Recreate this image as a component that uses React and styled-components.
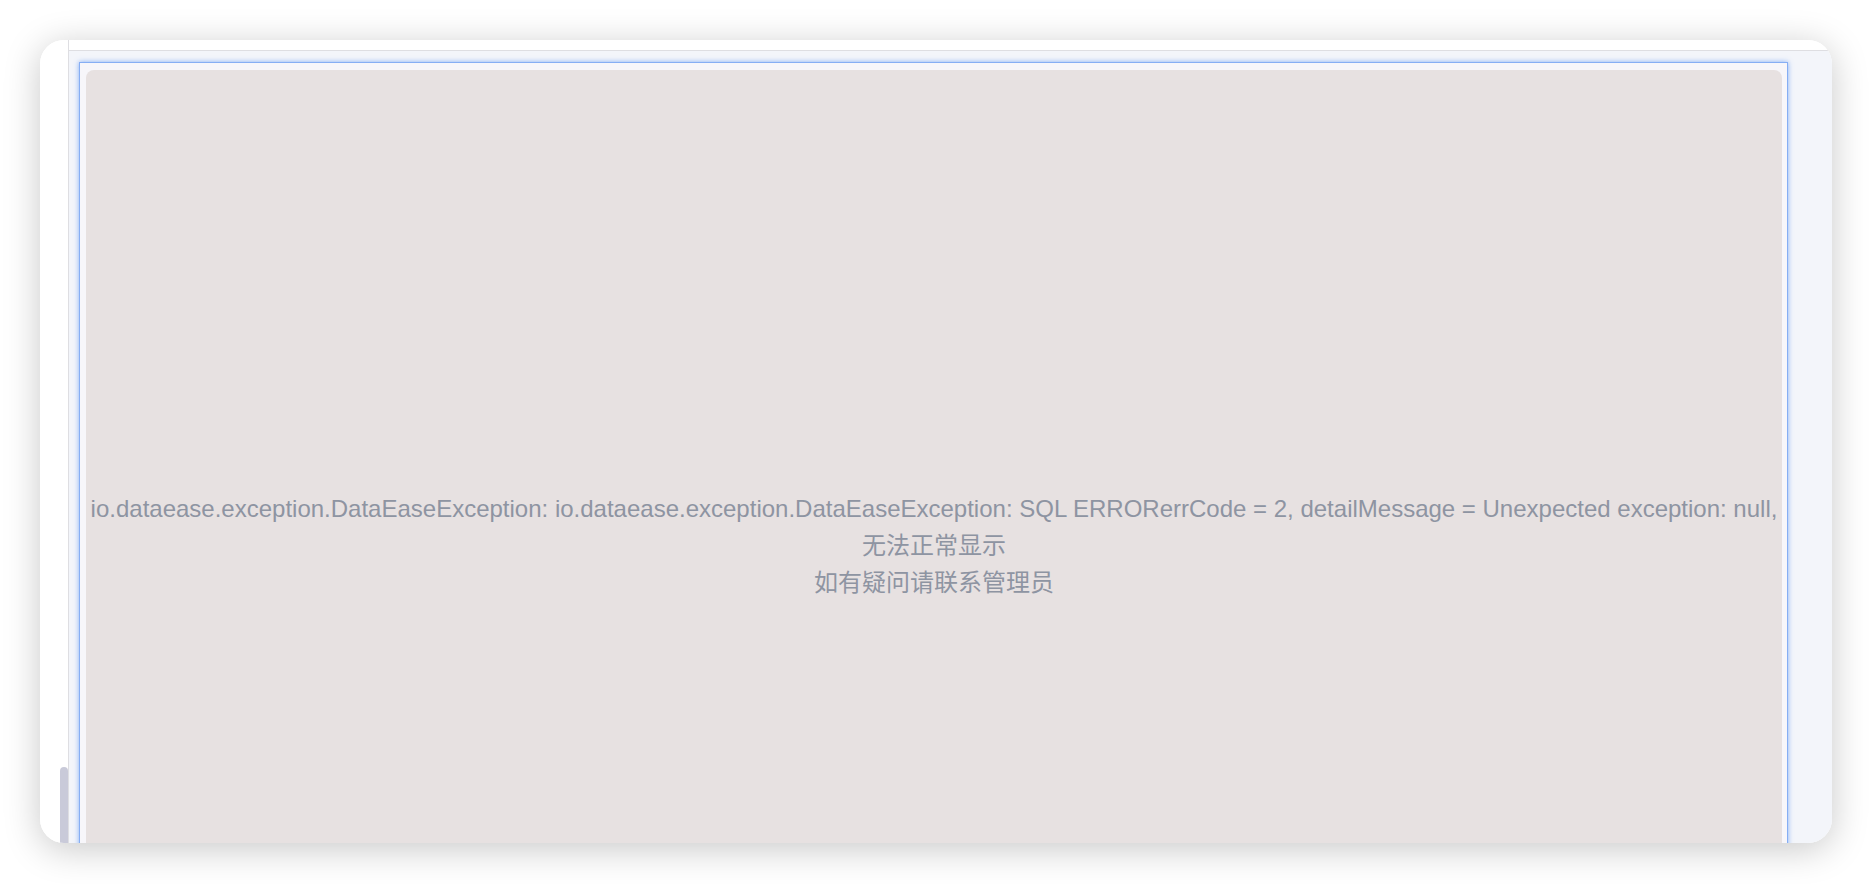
import React from "react";
import styled, { createGlobalStyle } from "styled-components";

const GlobalStyle = createGlobalStyle`
  html, body {
    margin: 0;
    padding: 0;
    background: #ffffff;
  }
  body {
    font-family: "Liberation Sans", "Noto Sans CJK SC", Arial, sans-serif;
  }
`;

const Page = styled.div`
  width: 1872px;
  height: 884px;
  padding: 40px;
  box-sizing: border-box;
  background: #ffffff;
`;

const Window = styled.div`
  position: relative;
  height: 803px;
  border-radius: 24px;
  background: #ffffff;
  box-shadow: 0 6px 36px rgba(0, 0, 0, 0.22);
  overflow: hidden;
  display: flex;
`;

const Sidebar = styled.div`
  width: 28px;
  flex-shrink: 0;
  background: #ffffff;
  border-right: 1px solid #dedee2;
`;

const ScrollThumb = styled.div`
  position: absolute;
  left: 20px;
  top: 727px;
  width: 8px;
  height: 90px;
  border-radius: 4px 4px 0 0;
  background: #c9cad9;
`;

const Main = styled.div`
  flex: 1;
  display: flex;
  flex-direction: column;
  min-width: 0;
`;

const TopBar = styled.div`
  height: 10px;
  flex-shrink: 0;
  background: #ffffff;
  border-bottom: 1px solid #dedee2;
`;

const Canvas = styled.div`
  flex: 1;
  background: #f3f5fa;
  padding: 11px 44px 0 10px;
`;

const Frame = styled.div`
  border: 1px solid #86aef4;
  box-shadow: 0 0 5px rgba(80, 140, 245, 0.7);
  background: #f7f6fa;
  padding: 7px 5px 0 6px;
`;

const ChartBox = styled.div`
  height: 950px;
  border-radius: 8px;
  background: #e7e1e1;
  display: flex;
  align-items: center;
  justify-content: center;
`;

const Message = styled.div`
  text-align: center;
  color: #8e94a2;
  font-size: 24px;
  line-height: 37px;
  font-family: "Liberation Sans", "Noto Sans CJK SC", Arial, sans-serif;
`;

export default function App() {
  return (
    <>
      <GlobalStyle />
      <Page>
        <Window>
          <Sidebar />
          <ScrollThumb />
          <Main>
            <TopBar />
            <Canvas>
              <Frame>
                <ChartBox>
                  <Message>
                    io.dataease.exception.DataEaseException: io.dataease.exception.DataEaseException: SQL ERRORerrCode = 2, detailMessage = Unexpected exception: null,
                    <br />
                    无法正常显示
                    <br />
                    如有疑问请联系管理员
                  </Message>
                </ChartBox>
              </Frame>
            </Canvas>
          </Main>
        </Window>
      </Page>
    </>
  );
}
